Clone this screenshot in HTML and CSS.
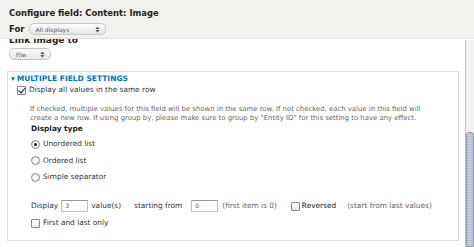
FILE: index.html
```html
<!DOCTYPE html>
<html lang="en">
<head>
  <meta charset="UTF-8" />
  <title>Configure field</title>
  <link rel="stylesheet" href="styles.css">
</head>
<body>
  <div class="dialog">
    <div class="head">
      <h1>Configure field: Content: Image</h1>
      <div class="for-row">
        <strong>For</strong>
        <span class="select select-wide">All displays <svg class="arrows" width="5" height="7" viewBox="0 0 5 7"><path d="M0.5 3 L2.5 0.5 L4.5 3 Z M0.5 4 L2.5 6.5 L4.5 4 Z" fill="#555"/></svg></span>
      </div>
    </div>

    <div class="body">
      <div class="content">
        <div class="link-item">
          <div class="item-label">Link image to</div>
          <span class="select select-small">File <svg class="arrows" width="5" height="7" viewBox="0 0 5 7"><path d="M0.5 3 L2.5 0.5 L4.5 3 Z M0.5 4 L2.5 6.5 L4.5 4 Z" fill="#555"/></svg></span>
        </div>

        <div class="fieldset">
          <div class="legend"><span class="caret">&#9662;</span>MULTIPLE FIELD SETTINGS</div>
          <label class="check-row"><span class="box checked"></span> Display all values in the same row</label>
          <div class="description">
            If checked, multiple values for this field will be shown in the same row. If not checked, each value in this field will<br>
            create a new row. If using group by, please make sure to group by "Entity ID" for this setting to have any effect.
          </div>

          <div class="group-title">Display type</div>
          <div class="radios">
            <label class="radio-row"><span class="radio on"></span> Unordered list</label>
            <label class="radio-row"><span class="radio"></span> Ordered list</label>
            <label class="radio-row"><span class="radio"></span> Simple separator</label>
          </div>

          <div class="display-row">
            <span>Display</span>
            <span class="text-input">3</span>
            <span class="gap-a">value(s)</span>
            <span>starting from</span>
            <span class="text-input second">0</span>
            <span class="gap-b">(first item is 0)</span>
            <label class="check-inline"><span class="box"></span> Reversed</label>
            <span class="gap-c">(start from last values)</span>
          </div>
          <label class="check-row last"><span class="box"></span> First and last only</label>
        </div>
      </div>
      <div class="scrollbar"><div class="thumb"></div></div>
    </div>
  </div>
</body>
</html>
```

FILE: styles.css
```css
body {
  margin: 0;
  background: #fff;
  font-family: "DejaVu Sans", sans-serif;
  color: #333;
}

.dialog {
  width: 474px;
  height: 247px;
  overflow: hidden;
  display: flex;
  flex-direction: column;
}

.head {
  background: #f3f3ed;
  border-bottom: 1px solid #e2e2da;
  height: 39px;
  padding: 0 9px;
  box-sizing: border-box;
}

.head h1 {
  margin: 0;
  padding-top: 6px;
  font-family: "DejaVu Sans Condensed", "Open Sans", sans-serif;
  font-size: 9.4px;
  line-height: 13px;
  font-weight: bold;
  color: #222;
}

.for-row {
  display: flex;
  align-items: center;
  gap: 4px;
  margin-top: 4px;
  font-size: 8.5px;
  color: #222;
}

.select {
  display: inline-flex;
  align-items: center;
  justify-content: space-between;
  height: 12px;
  box-sizing: border-box;
  padding: 0 5px 0 6px;
  border: 1px solid #c8c8c8;
  border-radius: 5px;
  background: linear-gradient(#fdfdfd, #e6e6e6);
  font-size: 6px;
  color: #555;
}

.select-wide { width: 77px; }
.select-small { width: 42px; }

.body {
  flex: 1;
  display: flex;
  overflow: hidden;
}

.content {
  flex: 1;
  padding: 0 6px 0 7px;
  margin-top: -5px;
}

.link-item {
  padding-left: 2px;
  display: flex;
  flex-direction: column;
  align-items: flex-start;
  gap: 2px;
}

.item-label {
  font-size: 9px;
  font-weight: bold;
  line-height: 12px;
  color: #222;
}

.fieldset {
  margin-top: 11px;
  border: 1px solid #dedede;
  height: 170px;
  box-sizing: border-box;
  padding: 2px 0 0 9px;
  font-size: 7.4px;
}

.legend {
  color: #0074bd;
  font-weight: bold;
  font-size: 7.5px;
  line-height: 10px;
  margin-left: -6px;
}

.caret {
  margin-right: 2px;
}

.check-row {
  display: flex;
  align-items: center;
  gap: 3px;
  margin-top: 1px;
  line-height: 10px;
}

.box {
  display: inline-block;
  width: 7px;
  height: 7px;
  border: 1px solid #888;
  border-radius: 1px;
  background: linear-gradient(#fff, #e8e8e8);
  position: relative;
}

.box.checked::after {
  content: "";
  position: absolute;
  left: 2px;
  top: -1px;
  width: 3px;
  height: 6px;
  border: solid #222;
  border-width: 0 1.5px 1.5px 0;
  transform: rotate(40deg);
}

.description {
  margin: 10px 0 0 13px;
  font-size: 6.9px;
  line-height: 8.5px;
  color: #666;
}

.group-title {
  margin: 2px 0 0 14px;
  font-weight: bold;
  line-height: 10px;
  color: #222;
}

.radios {
  margin: 5px 0 0 14px;
  display: flex;
  flex-direction: column;
  gap: 6.5px;
}

.radio-row {
  display: flex;
  align-items: center;
  gap: 3px;
  line-height: 10px;
}

.radio {
  display: inline-block;
  width: 7px;
  height: 7px;
  border: 1px solid #888;
  border-radius: 50%;
  background: radial-gradient(#fff, #e4e4e4);
  position: relative;
}

.radio.on::after {
  content: "";
  position: absolute;
  left: 2px;
  top: 2px;
  width: 3px;
  height: 3px;
  border-radius: 50%;
  background: #222;
}

.display-row {
  display: flex;
  align-items: center;
  margin: 18px 0 0 14px;
  line-height: 12px;
}

.text-input {
  display: inline-block;
  width: 27px;
  height: 12px;
  box-sizing: border-box;
  margin-left: 3px;
  padding-left: 3px;
  border: 1px solid #c0c0c0;
  border-top-color: #999;
  font-size: 6px;
  line-height: 10px;
  color: #555;
}

.text-input.second { margin-left: 9px; }

.gap-a { margin: 0 13px 0 3px; }
.gap-b { margin: 0 14px 0 4px; color: #666; }
.gap-c { margin-left: 11px; color: #666; }

.check-inline {
  display: flex;
  align-items: center;
  gap: 2px;
  color: #222;
}

.check-row.last {
  margin: 6px 0 0 14px;
}

.scrollbar {
  width: 8px;
  margin-top: 1px;
  display: flex;
  flex-direction: column;
  border-left: 1px solid #c4c4c4;
  background: #f2f2f2;
}

.thumb {
  margin-top: 92px;
  flex: 1;
  border: 1px solid #8a96a4;
  border-radius: 3px 3px 0 0;
  background: repeating-linear-gradient(#c7d2de 0 1px, #aebccb 1px 2px);
}
```
